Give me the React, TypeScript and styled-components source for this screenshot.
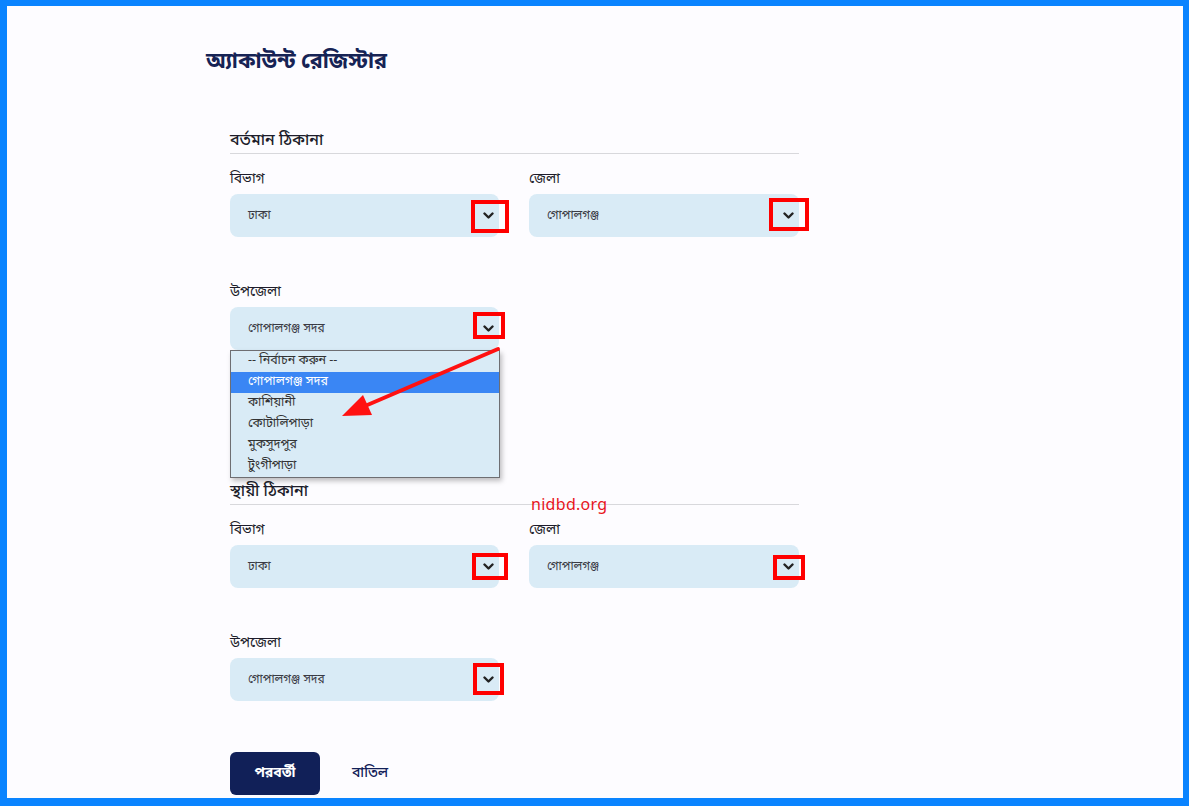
import styled, { createGlobalStyle } from 'styled-components'

const GlobalStyle = createGlobalStyle`
  html, body { margin: 0; padding: 0; }
  body {
    font-family: "Noto Sans Bengali", "Noto Sans", "Liberation Sans", sans-serif;
    background: #0a84ff;
  }
`

const upazilas = ['-- নির্বাচন করুন --', 'গোপালগঞ্জ সদর', 'কাশিয়ানী', 'কোটালিপাড়া', 'মুকসুদপুর', 'টুংগীপাড়া']

type Mark = { left: number; top: number; w: number; h: number }

function Chevron() {
  return (
    <svg width="11" height="8" viewBox="0 0 11 8">
      <polyline points="1.5,1.5 5.5,5.5 9.5,1.5" fill="none" stroke="#222" strokeWidth="2.4" strokeLinecap="round" strokeLinejoin="round" />
    </svg>
  )
}

function SelectField({ label, value, mark, children }: { label: string; value: string; mark: Mark; children?: React.ReactNode }) {
  return (
    <Field>
      <Label>{label}</Label>
      <SelectBox>
        <span>{value}</span>
        <Chevron />
        <RedMark $m={mark} />
        {children}
      </SelectBox>
    </Field>
  )
}

export default function App() {
  return (
    <Frame>
      <GlobalStyle />
      <Title>অ্যাকাউন্ট রেজিস্টার</Title>
      <Form>
        <Section>
          <SectionTitle>বর্তমান ঠিকানা</SectionTitle>
          <Grid>
            <SelectField label="বিভাগ" value="ঢাকা" mark={{ left: 241, top: 6, w: 38, h: 33 }} />
            <SelectField label="জেলা" value="গোপালগঞ্জ" mark={{ left: 240, top: 4, w: 40, h: 33 }} />
          </Grid>
          <Grid $top={46}>
            <SelectField label="উপজেলা" value="গোপালগঞ্জ সদর" mark={{ left: 243, top: 5, w: 32, h: 27 }}>
              <OptionList>
                {upazilas.map((u, i) => (
                  <OptionItem key={u} $active={i === 1}>{u}</OptionItem>
                ))}
              </OptionList>
              <Arrow width="170" height="80" viewBox="0 0 170 80">
                <line x1="166" y1="4" x2="26" y2="64" stroke="#f11" strokeWidth="4" strokeLinecap="round" />
                <polygon points="10,71 31,50 40,70" fill="#f11" />
              </Arrow>
            </SelectField>
          </Grid>
        </Section>

        <Section $top={130}>
          <SectionTitle>স্থায়ী ঠিকানা</SectionTitle>
          <Watermark>nidbd.org</Watermark>
          <Grid>
            <SelectField label="বিভাগ" value="ঢাকা" mark={{ left: 242, top: 8, w: 36, h: 27 }} />
            <SelectField label="জেলা" value="গোপালগঞ্জ" mark={{ left: 244, top: 10, w: 32, h: 25 }} />
          </Grid>
          <Grid $top={46}>
            <SelectField label="উপজেলা" value="গোপালগঞ্জ সদর" mark={{ left: 243, top: 5, w: 31, h: 32 }} />
          </Grid>
        </Section>

        <Actions>
          <PrimaryButton>পরবর্তী</PrimaryButton>
          <LinkButton>বাতিল</LinkButton>
        </Actions>
      </Form>
    </Frame>
  )
}

const Frame = styled.div`
  box-sizing: border-box;
  width: 1189px;
  height: 806px;
  border: solid #0a84ff;
  border-width: 6px 6px 8px 7px;
  background: #fdfcff;
  padding: 36px 0 0 199px;
  overflow: hidden;
`

const Title = styled.h1`
  margin: 0;
  font-size: 21.5px;
  font-weight: 700;
  line-height: 36px;
  color: #162355;
  padding-top: 3px;
`

const Form = styled.div`
  width: 569px;
  margin: 48px 0 0 24px;
`

const Section = styled.div<{ $top?: number }>`
  position: relative;
  margin-top: ${p => p.$top ?? 0}px;
`

const SectionTitle = styled.h3`
  margin: 0 0 16px;
  padding-bottom: 0;
  border-bottom: 1px solid #d8d8dc;
  font-size: 16px;
  font-weight: 500;
  line-height: 24px;
  color: #1c1c2a;
`

const Watermark = styled.div`
  position: absolute;
  left: 301px;
  top: 13px;
  font-family: "Noto Sans", "Liberation Sans", sans-serif;
  font-size: 16px;
  line-height: 22px;
  color: #e8141c;
  letter-spacing: 0.3px;
`

const Grid = styled.div<{ $top?: number }>`
  display: grid;
  grid-template-columns: 269px 270px;
  column-gap: 30px;
  margin-top: ${p => p.$top ?? 0}px;
`

const Field = styled.div`
  display: flex;
  flex-direction: column;
`

const Label = styled.label`
  font-size: 14px;
  line-height: 20px;
  margin-bottom: 4px;
  color: #1c1c2a;
`

const SelectBox = styled.div`
  position: relative;
  box-sizing: border-box;
  height: 43px;
  display: flex;
  align-items: center;
  justify-content: space-between;
  padding: 0 5px 0 18px;
  background: #d9ebf6;
  border-radius: 8px;
  font-size: 12px;
  color: #3a3a44;
`

const RedMark = styled.div<{ $m: Mark }>`
  position: absolute;
  box-sizing: border-box;
  left: ${p => p.$m.left}px;
  top: ${p => p.$m.top}px;
  width: ${p => p.$m.w}px;
  height: ${p => p.$m.h}px;
  border: 4px solid #ff0000;
`

const OptionList = styled.ul`
  position: absolute;
  left: 0;
  top: 43px;
  width: 270px;
  box-sizing: border-box;
  margin: 0;
  padding: 0;
  list-style: none;
  background: #d9ebf6;
  border: 1px solid #6e6e72;
  box-shadow: 2px 3px 5px rgba(0, 0, 0, 0.25);
  z-index: 2;
`

const OptionItem = styled.li<{ $active?: boolean }>`
  height: 21px;
  line-height: 21px;
  padding-left: 17px;
  font-size: 12.5px;
  color: ${p => (p.$active ? '#fff' : '#333')};
  background: ${p => (p.$active ? '#3a86f4' : 'transparent')};
`

const Arrow = styled.svg`
  position: absolute;
  left: 102px;
  top: 38px;
  z-index: 3;
  overflow: visible;
`

const Actions = styled.div`
  display: flex;
  align-items: center;
  gap: 32px;
  margin-top: 51px;
`

const PrimaryButton = styled.button`
  width: 90px;
  height: 43px;
  border: none;
  border-radius: 6px;
  background: #112058;
  color: #fff;
  font-family: inherit;
  font-size: 14px;
  font-weight: 700;
`

const LinkButton = styled.button`
  border: none;
  background: transparent;
  padding: 0;
  color: #112058;
  font-family: inherit;
  font-size: 14px;
  font-weight: 500;
`
